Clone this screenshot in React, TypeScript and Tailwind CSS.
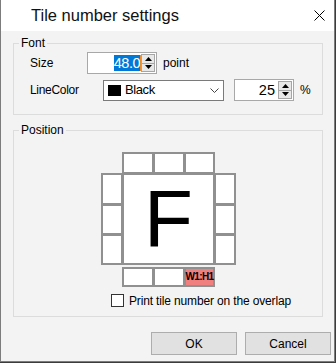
import React from 'react';

const ui = { fontFamily: '"Liberation Sans", Arial, sans-serif' };

const Spinner = () => (
  <div className="flex flex-col w-[14px] h-full">
    <div className="flex-1 flex items-center justify-center border border-[#a6a6a6] bg-[#e8e8e8]">
      <svg width="7" height="4" viewBox="0 0 7 4">
        <path d="M3.5 0L7 4H0z" fill="#000" />
      </svg>
    </div>
    <div className="flex-1 flex items-center justify-center border border-t-0 border-[#a6a6a6] bg-[#e8e8e8]">
      <svg width="7" height="4" viewBox="0 0 7 4">
        <path d="M0 0H7L3.5 4z" fill="#000" />
      </svg>
    </div>
  </div>
);

const Cell = ({ className = '', children }: { className?: string; children?: React.ReactNode }) => (
  <div className={`border-2 border-[#909090] bg-white flex items-center justify-center ${className}`}>
    {children}
  </div>
);

const App = () => {
  return (
    <div className="w-[336px] h-[363px] bg-[#3c3c3c]" style={ui}>
      <div className="w-[335px] h-[362px] flex flex-col border-l border-r border-b border-[#7c7c7c] bg-[#f3f3f3] text-black">
        {/* title bar */}
        <div className="h-[31px] bg-white flex items-center justify-between pl-[30px] pr-[9px]">
          <span className="text-[16.5px] leading-none text-[#111]">Tile number settings</span>
          <svg width="11" height="11" viewBox="0 0 11 11">
            <path d="M0.5 0.5L10.5 10.5M10.5 0.5L0.5 10.5" stroke="#000" strokeWidth="1" />
          </svg>
        </div>

        <div className="flex flex-col pl-[12px] text-[12px]">
          {/* Font group */}
          <fieldset className="mt-[5px] w-[310px] border border-[#dcdcdc]">
            <legend className="ml-[5px] px-[2px] leading-[14px]">Font</legend>
            <div className="pl-[16px] pt-[2px] pb-[13px] flex flex-col gap-[5px]">
              <div className="flex items-center h-[22px]">
                <span className="w-[57px]">Size</span>
                <div className="w-[70px] h-[22px] border border-[#a8a8a8] bg-white flex items-stretch p-[1px]">
                  <div className="flex-1 flex items-center justify-end">
                    <span className="bg-[#0078d7] text-white text-[14.5px] leading-[16px] tracking-[-0.5px]">48.0</span>
                    <span className="w-[1px] h-[16px] bg-[#f08a24]" />
                  </div>
                  <Spinner />
                </div>
                <span className="ml-[6px]">point</span>
              </div>
              <div className="flex items-center h-[22px]">
                <span className="w-[73px] tracking-[-0.3px]">LineColor</span>
                <div className="w-[121px] h-[21px] border border-[#7a7a7a] bg-white flex items-center pl-[4px] pr-[3px]">
                  <span className="w-[13px] h-[11px] bg-black" />
                  <span className="ml-[4px] flex-1 text-[13px] tracking-[-0.4px]">Black</span>
                  <svg width="9" height="5" viewBox="0 0 9 5" className="mr-[1px]">
                    <path d="M0.5 0.5L4.5 4.5L8.5 0.5" stroke="#444" fill="none" strokeWidth="1" />
                  </svg>
                </div>
                <div className="ml-[10px] w-[60px] h-[22px] border border-[#a8a8a8] bg-white flex items-stretch p-[1px]">
                  <div className="flex-1 flex items-center justify-end pr-[3px] text-[14.5px] leading-none">25</div>
                  <Spinner />
                </div>
                <span className="ml-[6px]">%</span>
              </div>
            </div>
          </fieldset>

          {/* Position group */}
          <fieldset className="mt-[8px] w-[310px] border border-[#dcdcdc]">
            <legend className="ml-[5px] px-[2px] leading-[14px]">Position</legend>
            <div className="pt-[15px] pb-[9px] flex flex-col">
              <div className="ml-[87px] flex flex-col">
                <div className="flex ml-[21px] h-[22px] -mb-[1px]">
                  <Cell className="w-[32px]" />
                  <Cell className="w-[32px] -ml-[1px]" />
                  <Cell className="w-[31px] -ml-[1px]" />
                </div>
                <div className="flex">
                  <div className="flex flex-col w-[22px] -mr-[1px]">
                    <Cell className="h-[32px]" />
                    <Cell className="h-[31px] -mt-[1px]" />
                    <Cell className="h-[31px] -mt-[1px]" />
                  </div>
                  <Cell className="w-[93px] h-[92px]">
                    <span className="text-[80px] leading-none">F</span>
                  </Cell>
                  <div className="flex flex-col w-[22px] -ml-[1px]">
                    <Cell className="h-[32px]" />
                    <Cell className="h-[31px] -mt-[1px]" />
                    <Cell className="h-[31px] -mt-[1px]" />
                  </div>
                </div>
                <div className="flex ml-[21px] mt-[2px] h-[20px]">
                  <Cell className="w-[32px]" />
                  <Cell className="w-[32px] -ml-[1px]" />
                  <Cell className="w-[31px] -ml-[1px] !bg-[#f08080]">
                    <span className="text-[10px] font-bold leading-none tracking-[-0.6px]">W1:H1</span>
                  </Cell>
                </div>
              </div>
              <label className="ml-[97px] mt-[7px] flex items-center h-[13px]">
                <span className="w-[13px] h-[13px] border border-[#333] bg-white" />
                <span className="ml-[5px] tracking-[-0.15px]">Print tile number on the overlap</span>
              </label>
            </div>
          </fieldset>

          {/* buttons */}
          <div className="mt-[15px] flex justify-end gap-[8px] pr-[3px]">
            <button className="w-[86px] h-[23px] border border-[#adadad] bg-[#e1e1e1] text-[12px]">OK</button>
            <button className="w-[86px] h-[23px] border border-[#adadad] bg-[#e1e1e1] text-[12px]">Cancel</button>
          </div>
        </div>
      </div>
    </div>
  );
};

export default App;
